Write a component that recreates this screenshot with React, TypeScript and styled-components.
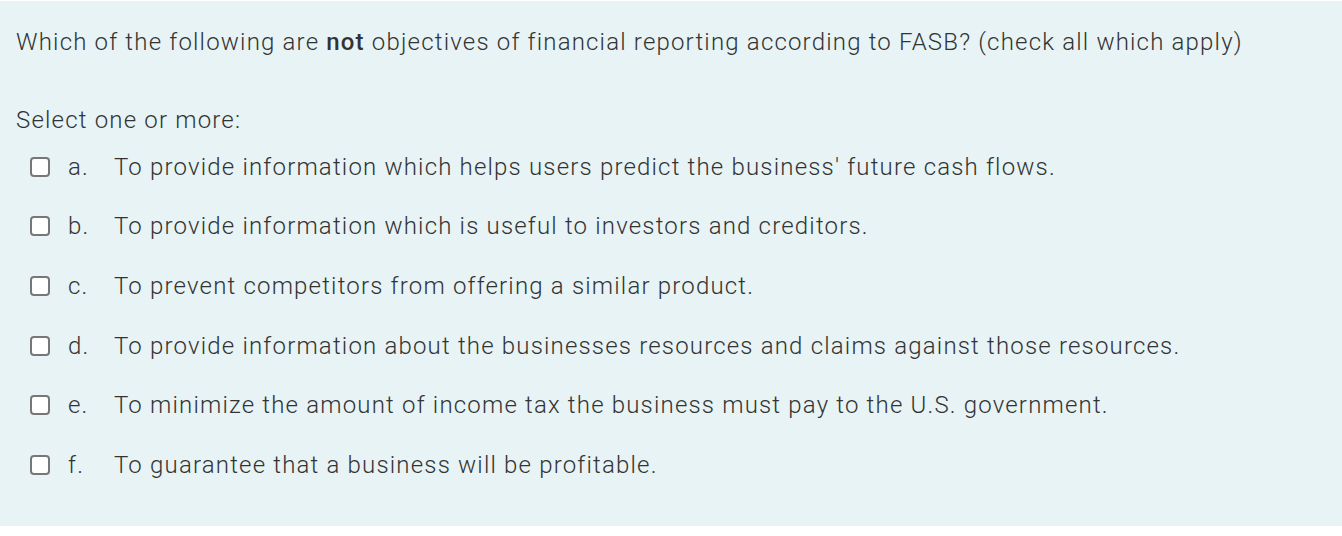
import styled, { createGlobalStyle } from "styled-components";

const Global = createGlobalStyle`
    body {
        margin: 0;
        background: #fff;
        font-family: Roboto, "Liberation Sans", sans-serif;
        font-weight: 300;
        color: #333;
        letter-spacing: 1.18px;
        font-variant-ligatures: none;
    }
    b { font-weight: 500; }
`;

const Panel = styled.div`
    margin-top: 1px;
    height: 525px;
    box-sizing: border-box;
    background-color: #e7f3f5;
    padding: 23px 16px 0 16px;
`;

const Question = styled.p`
    margin: 0;
    font-size: 24px;
    line-height: 36px;
`;

const Prompt = styled.div`
    margin-top: 42px;
    font-size: 24px;
    line-height: 36px;
`;

const Options = styled.div`
    display: flex;
    flex-direction: column;
    margin-top: -1px;
`;

const Row = styled.label`
    height: 59.6px;
    display: flex;
    align-items: center;
    padding-left: 14px;
    font-size: 24px;
`;

const Box = styled.span`
    width: 20px;
    height: 20px;
    box-sizing: border-box;
    border: 2px solid #777;
    border-radius: 4px;
    background: #fff;
    flex-shrink: 0;
`;

const Letter = styled.span`
    width: 46px;
    margin-left: 18px;
`;

const options = [
    ["a", "To provide information which helps users predict the business' future cash flows."],
    ["b", "To provide information which is useful to investors and creditors."],
    ["c", "To prevent competitors from offering a similar product."],
    ["d", "To provide information about the businesses resources and claims against those resources."],
    ["e", "To minimize the amount of income tax the business must pay to the U.S. government."],
    ["f", "To guarantee that a business will be profitable."],
];

export default function App() {
    return <>
        <Global />
        <Panel>
            <Question>
                Which of the following are <b>not</b> objectives of financial reporting according to FASB? (check all which apply)
            </Question>
            <Prompt>Select one or more:</Prompt>
            <Options>
                {options.map(([l, t]) => (
                    <Row key={l}>
                        <Box />
                        <Letter>{l}.</Letter>
                        <span>{t}</span>
                    </Row>
                ))}
            </Options>
        </Panel>
    </>;
}
